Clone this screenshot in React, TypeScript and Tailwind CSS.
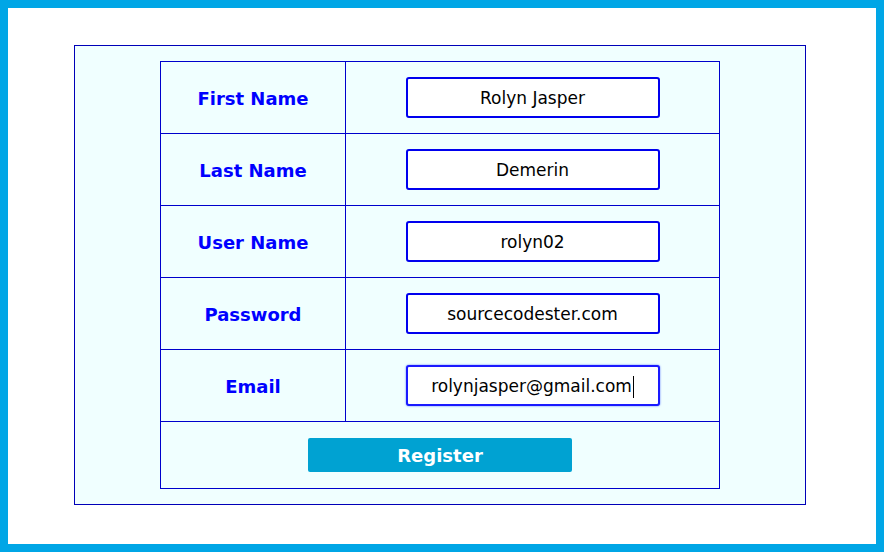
const fields = [
  { label: "First Name", value: "Rolyn Jasper" },
  { label: "Last Name", value: "Demerin" },
  { label: "User Name", value: "rolyn02" },
  { label: "Password", value: "sourcecodester.com" },
  { label: "Email", value: "rolynjasper@gmail.com", focused: true },
];

const comic = { fontFamily: '"Comic Sans MS", "DejaVu Sans", sans-serif' };

export default function App() {
  return (
    <div className="h-[552px] w-[884px] border-8 border-[#00a6e6] bg-white pt-[37px]" style={comic}>
      <div className="ml-[66px] w-[732px] border border-[#0000b8] bg-[#f0ffff] py-[15px]">
        <table className="mx-auto w-[560px] border-collapse">
          <tbody>
            {fields.map((f) => (
              <tr key={f.label} className="h-[72px]">
                <td className="w-[185px] border border-[#0000cc] pt-px text-center text-[18px] font-bold text-[#0000ff]">
                  {f.label}
                </td>
                <td className="border border-[#0000cc]">
                  <div
                    className={
                      "mx-auto flex h-[41px] w-[254px] items-center justify-center rounded-[3px] border-2 bg-white pt-0.5 text-[17px] text-black " +
                      (f.focused ? "border-[#1a1aff] shadow-[0_0_2px_#4d6bff]" : "border-[#0000ee]")
                    }
                  >
                    <span>{f.value}</span>
                    {f.focused && <span className="ml-px h-[22px] w-px bg-black" />}
                  </div>
                </td>
              </tr>
            ))}
            <tr className="h-[67px]">
              <td colSpan={2} className="border border-[#0000cc] text-center">
                <button
                  className="h-[34px] w-[264px] rounded-[2px] bg-[#00a2d2] text-[18px] font-bold text-white"
                  style={{ fontFamily: '"DejaVu Sans", Verdana, sans-serif' }}
                >
                  Register
                </button>
              </td>
            </tr>
          </tbody>
        </table>
      </div>
    </div>
  );
}
